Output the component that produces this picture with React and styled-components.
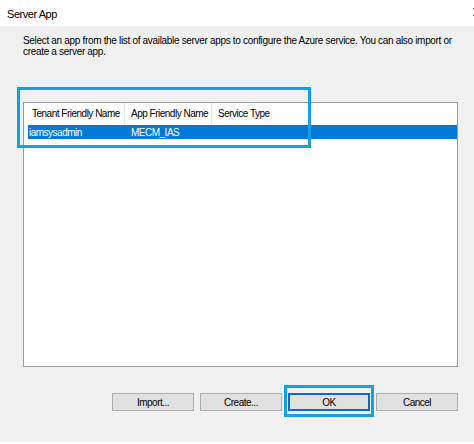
import React from "react";
import styled, { createGlobalStyle } from "styled-components";

const Global = createGlobalStyle`
  html, body { margin: 0; padding: 0; background: #ffffff; }
  body { width: 474px; height: 444px; overflow: hidden; }
  * { box-sizing: border-box; }
`;

const FONT = `"Liberation Sans", Arial, sans-serif`;

const Window = styled.div`
  width: 474px;
  height: 444px;
  display: flex;
  flex-direction: column;
  font-family: ${FONT};
  color: #000;
`;

const TitleBar = styled.div`
  height: 26px;
  flex: none;
  display: flex;
  align-items: center;
  justify-content: space-between;
  padding-left: 7px;
  background: #fff;
  overflow: hidden;
`;

const Title = styled.span`
  font-size: 11px;
  letter-spacing: -0.45px;
  margin-top: 1px;
`;

const CloseIcon = styled.svg`
  width: 10px;
  height: 10px;
  margin-right: -8px;
  margin-top: -3px;
  flex: none;
`;

const Body = styled.div`
  flex: 1;
  margin-bottom: 2px;
  background: #f0f0f0;
  padding: 9px 16px 0 23px;
  display: flex;
  flex-direction: column;
`;

const Description = styled.p`
  margin: 0;
  font-size: 10px;
  line-height: 11px;
  letter-spacing: -0.32px;
  white-space: nowrap;
`;

const ListArea = styled.div`
  position: relative;
  margin-top: 45px;
`;

const Highlight = styled.div`
  position: absolute;
  border: 3px solid #16a0e4;
  pointer-events: none;
`;

const ListView = styled.div`
  height: 265px;
  background: #fff;
  border: 1px solid #9a9a9a;
  display: flex;
  flex-direction: column;
`;

const Header = styled.div`
  display: grid;
  grid-template-columns: 101px 87px 1fr;
  height: 21px;
`;

const HeaderCell = styled.div`
  display: flex;
  align-items: center;
  padding-left: ${(p) => p.$pad || 6}px;
  font-size: 10px;
  letter-spacing: -0.5px;
  border-right: ${(p) => (p.$last ? "none" : "1px solid #e5e5e5")};
`;

const Row = styled.div`
  display: grid;
  grid-template-columns: 97px 87px 1fr;
  height: 14px;
  margin-left: 4px;
  margin-top: 1px;
  background: ${(p) => (p.$selected ? "#0078d7" : "transparent")};
  color: ${(p) => (p.$selected ? "#fff" : "#000")};
`;

const Cell = styled.div`
  display: flex;
  align-items: center;
  padding-left: ${(p) => p.$pad || 6}px;
  font-size: 10px;
  letter-spacing: -0.5px;
  white-space: nowrap;
`;

const ButtonRow = styled.div`
  display: flex;
  justify-content: flex-end;
  gap: 6px;
  margin-top: 26px;
`;

const ButtonWrap = styled.div`
  position: relative;
  display: flex;
`;

const Button = styled.button`
  width: 82px;
  height: 18px;
  padding: 0;
  font-family: ${FONT};
  font-size: 10px;
  letter-spacing: -0.5px;
  color: #000;
  background: #e1e1e1;
  border: ${(p) => (p.$default ? "2px solid #0b6bc6" : "1px solid #adadad")};
  display: flex;
  align-items: center;
  justify-content: center;
`;

const columns = [
  { label: "Tenant Friendly Name", pad: 8 },
  { label: "App Friendly Name", pad: 6 },
  { label: "Service Type", pad: 6, last: true },
];

const rows = [{ tenant: "iamsysadmin", app: "MECM_IAS", type: "", selected: true }];

export default function App() {
  return (
    <>
      <Global />
      <Window>
        <TitleBar>
          <Title>Server App</Title>
          <CloseIcon viewBox="0 0 10 10" aria-hidden="true">
            <path d="M1 1 L9 9 M9 1 L1 9" stroke="#555" strokeWidth="1" fill="none" />
          </CloseIcon>
        </TitleBar>
        <Body>
          <Description>
            Select an app from the list of available server apps to configure the Azure service. You can also import or
            <br />
            create a server app.
          </Description>
          <ListArea>
            <ListView>
              <Header>
                {columns.map((c) => (
                  <HeaderCell key={c.label} $pad={c.pad} $last={c.last}>
                    {c.label}
                  </HeaderCell>
                ))}
              </Header>
              {rows.map((r) => (
                <Row key={r.tenant} $selected={r.selected}>
                  <Cell $pad={1}>{r.tenant}</Cell>
                  <Cell $pad={6}>{r.app}</Cell>
                  <Cell $pad={6}>{r.type}</Cell>
                </Row>
              ))}
            </ListView>
            <Highlight style={{ left: -6, top: -15, width: 294, height: 61 }} />
          </ListArea>
          <ButtonRow>
            <Button>Import...</Button>
            <Button>Create...</Button>
            <ButtonWrap>
              <Button $default>OK</Button>
              <Highlight style={{ left: -4, top: -8, width: 90, height: 32 }} />
            </ButtonWrap>
            <Button>Cancel</Button>
          </ButtonRow>
        </Body>
      </Window>
    </>
  );
}
